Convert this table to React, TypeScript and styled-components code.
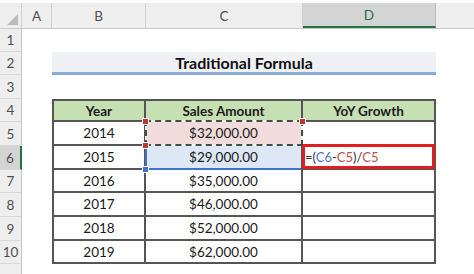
import React from "react";
import styled, { createGlobalStyle, css } from "styled-components";

const Global = createGlobalStyle`
  html, body { margin: 0; padding: 0; background: #ffffff; }
  body { font-family: Lato, "Open Sans", sans-serif; }
`;

const COLS = "22px 30px 94px 157px 133px 1fr";

const Sheet = styled.div`
  width: 474px;
  height: 274px;
  overflow: hidden;
  padding-top: 3px;
  box-sizing: border-box;
  display: flex;
  flex-direction: column;
  background: #fff;
`;

const Row = styled.div<{ $h: number }>`
  display: grid;
  grid-template-columns: ${COLS};
  height: ${(p) => p.$h}px;
  flex: none;
`;

const HeaderRow = styled(Row)`
  background: #eeeeee;
  border-bottom: 1px solid #c9c9c9;
  box-sizing: border-box;
`;

const Corner = styled.div`
  position: relative;
  border-right: 1px solid #d2d2d2;
`;

const CornerTri = styled.svg`
  position: absolute;
  right: 3px;
  bottom: 3px;
`;

const ColHead = styled.div<{ $sel?: boolean }>`
  display: flex;
  align-items: center;
  justify-content: center;
  font-size: 13.5px;
  color: #4f4f4f;
  border-right: 1px solid #d2d2d2;
  box-sizing: border-box;
  ${(p) =>
    p.$sel &&
    css`
      background: #d4d4d4;
      color: #217346;
      border-bottom: 2px solid #217346;
      border-right: 1px solid #bdbdbd;
    `}
`;

const RowHead = styled.div<{ $sel?: boolean }>`
  display: flex;
  align-items: center;
  justify-content: center;
  font-size: 13.5px;
  color: #4f4f4f;
  background: #eeeeee;
  border-right: 1px solid #c9c9c9;
  border-bottom: 1px solid #d8d8d8;
  box-sizing: border-box;
  ${(p) =>
    p.$sel &&
    css`
      background: #d4d4d4;
      border-right: 2px solid #217346;
    `}
`;

const Blank = styled.div``;

const Title = styled.div`
  grid-column: 3 / 6;
  display: flex;
  align-items: center;
  justify-content: center;
  background: #eef0f3;
  border-bottom: 3px solid #8eaadb;
  box-sizing: border-box;
  font-weight: 700;
  font-size: 16px;
  color: #111;
`;

const TCell = styled.div<{ $first?: boolean; $top?: boolean; $bg?: string; $head?: boolean; $left?: boolean }>`
  position: relative;
  display: flex;
  align-items: center;
  justify-content: ${(p) => (p.$left ? "flex-start" : "center")};
  padding-left: ${(p) => (p.$left ? "2px" : "0")};
  box-sizing: border-box;
  border-right: 2px solid #555;
  border-bottom: 2px solid #555;
  ${(p) => p.$first && "border-left: 2px solid #555;"}
  ${(p) => p.$top && "border-top: 2px solid #555;"}
  background: ${(p) => p.$bg || "#fff"};
  font-size: 13.5px;
  font-weight: ${(p) => (p.$head ? 700 : 400)};
  color: #1a1a1a;
  white-space: nowrap;
`;

const Ants = styled.div`
  position: absolute;
  inset: -2px -2px -2px -1px;
  border: 2px solid #f4f4f0;
  z-index: 2;
  pointer-events: none;
  &::after {
    content: "";
    position: absolute;
    inset: -2px;
    border: 2px dashed #454f45;
  }
`;

const Handle = styled.div<{ $c: string; $x: "l" | "r"; $y: "t" | "b" }>`
  position: absolute;
  width: 5px;
  height: 5px;
  background: ${(p) => p.$c};
  border: 1px solid #fff;
  ${(p) => (p.$x === "l" ? "left: -4px;" : "right: -5px;")}
  ${(p) => (p.$y === "t" ? "top: -4px;" : "bottom: -5px;")}
  z-index: 3;
`;

const ActiveEdge = styled.div`
  position: absolute;
  left: -1px;
  top: 0;
  right: 0;
  bottom: -2px;
  border-left: 2px solid #4472c4;
  border-bottom: 2px solid #4472c4;
  pointer-events: none;
`;

const RedBox = styled.div`
  position: absolute;
  left: -1px;
  top: -2px;
  right: -1px;
  bottom: -1px;
  border: 3px solid #e31b23;
  pointer-events: none;
`;

const Formula = styled.span`
  font-size: 13px;
  color: #333;
`;

const Ref = styled.span<{ $c: string }>`
  color: ${(p) => p.$c};
`;

const data = [
  ["2014", "$32,000.00"],
  ["2015", "$29,000.00"],
  ["2016", "$35,000.00"],
  ["2017", "$46,000.00"],
  ["2018", "$52,000.00"],
  ["2019", "$62,000.00"],
];

const heights = [23, 23, 24, 23, 24, 24, 23, 24, 24, 23];

export default function App() {
  return (
    <>
      <Global />
      <Sheet>
        <HeaderRow $h={26}>
          <Corner>
            <CornerTri width="11" height="11" viewBox="0 0 11 11">
              <polygon points="11,0 11,11 0,11" fill="#bcbcbc" />
            </CornerTri>
          </Corner>
          <ColHead>A</ColHead>
          <ColHead>B</ColHead>
          <ColHead>C</ColHead>
          <ColHead $sel>D</ColHead>
          <Blank />
        </HeaderRow>

        <Row $h={heights[0]}>
          <RowHead>1</RowHead>
        </Row>

        <Row $h={heights[1]}>
          <RowHead>2</RowHead>
          <Blank />
          <Title>Traditional Formula</Title>
        </Row>

        <Row $h={heights[2]}>
          <RowHead>3</RowHead>
        </Row>

        <Row $h={heights[3]}>
          <RowHead>4</RowHead>
          <Blank />
          <TCell $first $top $head $bg="#c6e0b4">Year</TCell>
          <TCell $top $head $bg="#c6e0b4">Sales Amount</TCell>
          <TCell $top $head $bg="#c6e0b4">YoY Growth</TCell>
        </Row>

        {data.map(([year, amt], i) => {
          const rowNo = i + 5;
          const isCopy = rowNo === 5;
          const isActive = rowNo === 6;
          return (
            <Row $h={heights[i + 4]} key={year}>
              <RowHead $sel={isActive}>{rowNo}</RowHead>
              <Blank />
              <TCell $first>{year}</TCell>
              <TCell $bg={isCopy ? "#f2dcdb" : isActive ? "#dde7f5" : "#fff"}>
                {amt}
                {isCopy && (
                  <>
                    <Ants />
                    <Handle $c="#c0392b" $x="l" $y="t" />
                    <Handle $c="#c0392b" $x="l" $y="b" />
                    <Handle $c="#c0392b" $x="r" $y="t" />
                  </>
                )}
                {isActive && (
                  <>
                    <ActiveEdge />
                    <Handle $c="#4472c4" $x="l" $y="b" />
                  </>
                )}
              </TCell>
              <TCell $left>
                {isActive && (
                  <>
                    <Formula>
                      =(<Ref $c="#4a78c2">C6</Ref>-<Ref $c="#c0504d">C5</Ref>)/<Ref $c="#c0504d">C5</Ref>
                    </Formula>
                    <RedBox />
                  </>
                )}
              </TCell>
            </Row>
          );
        })}

        <Row $h={12}>
          <RowHead />
        </Row>
      </Sheet>
    </>
  );
}
